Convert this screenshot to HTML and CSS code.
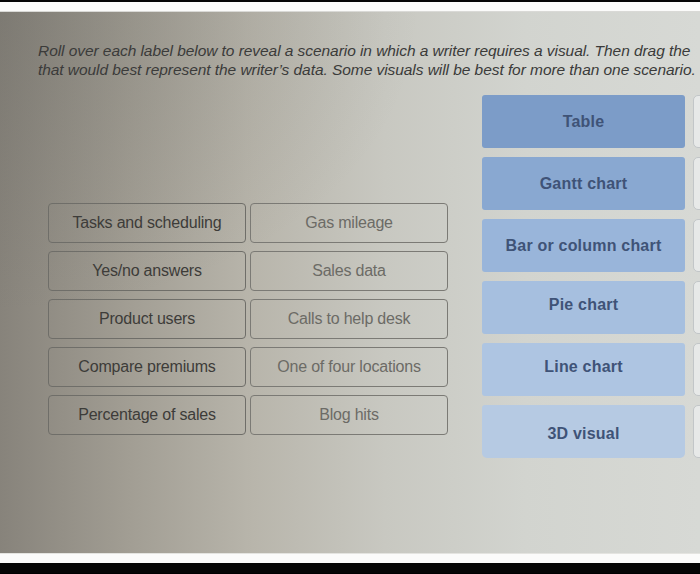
FILE: index.html
```html
<!DOCTYPE html>
<html lang="en">
<head>
<meta charset="utf-8">
<title>Match visuals to scenarios</title>
<link rel="stylesheet" href="styles.css">
</head>
<body>
<div class="frame">
  <div class="bezel bezel-top"></div>
  <div class="gap gap-top"></div>
  <main class="screen">
    <p class="instr">
      <span class="line">Roll over each label below to reveal a scenario in which a writer requires a visual. Then drag the</span>
      <span class="line">that would best represent the writer’s data. Some visuals will be best for more than one scenario.</span>
    </p>
    <div class="workarea">
      <div class="labels">
        <div class="label dark">Tasks and scheduling</div>
        <div class="label light">Gas mileage</div>
        <div class="label dark">Yes/no answers</div>
        <div class="label light">Sales data</div>
        <div class="label dark">Product users</div>
        <div class="label light">Calls to help desk</div>
        <div class="label dark">Compare premiums</div>
        <div class="label light">One of four locations</div>
        <div class="label dark">Percentage of sales</div>
        <div class="label light">Blog hits</div>
      </div>
      <div class="visuals">
        <div class="visual v1">Table</div>
        <div class="visual v2">Gantt chart</div>
        <div class="visual v3">Bar or column chart</div>
        <div class="visual v4">Pie chart</div>
        <div class="visual v5">Line chart</div>
        <div class="visual v6">3D visual</div>
      </div>
      <div class="targets">
        <div class="target"></div>
        <div class="target"></div>
        <div class="target"></div>
        <div class="target"></div>
        <div class="target"></div>
        <div class="target"></div>
      </div>
    </div>
  </main>
  <div class="gap gap-bottom"></div>
  <div class="bezel bezel-bottom"></div>
</div>
</body>
</html>
```

FILE: styles.css
```css
* { box-sizing: border-box; }
html, body { margin: 0; padding: 0; }
body {
  width: 700px;
  height: 574px;
  overflow: hidden;
  background: #000;
  font-family: "Liberation Sans", Arial, sans-serif;
}
.frame {
  display: flex;
  flex-direction: column;
  width: 700px;
  height: 574px;
}
.bezel { background: #050505; }
.bezel-top { height: 2px; }
.bezel-bottom { height: 10px; }
.gap { background: #fbfbfa; }
.gap-top { height: 10px; border-bottom: 1px solid #d9d9d6; }
.gap-bottom { height: 10px; border-top: 1px solid #e4e4e0; }

.screen {
  height: 541px;
  overflow: hidden;
  padding: 29px 0 0 38px;
  background:
    radial-gradient(ellipse 420px 300px at 0% 0%, rgba(90, 90, 85, 0.22), rgba(90, 90, 85, 0) 100%),
    linear-gradient(90deg, #87837b 0%, #a19d93 18%, #b8b5ab 36%, #c8c8c1 55%, #d2d4cf 75%, #d7d9d5 100%);
}

.instr {
  margin: 0;
  width: 662px;
  font-size: 15.5px;
  font-style: italic;
  line-height: 19px;
  color: #3b3b3a;
  letter-spacing: -0.06px;
}
.instr .line {
  display: block;
  white-space: nowrap;
}

.workarea {
  display: flex;
  align-items: flex-start;
  margin-top: 16px;
  width: 760px;
}

.labels {
  flex-shrink: 0;
  display: grid;
  grid-template-columns: 198px 198px;
  grid-auto-rows: 40px;
  column-gap: 4px;
  row-gap: 8px;
  margin: 108px 0 0 10px;
}
.label {
  display: flex;
  align-items: center;
  justify-content: center;
  border: 1.5px solid #6f6e69;
  border-radius: 4px;
  font-size: 16px;
  letter-spacing: -0.2px;
  padding-bottom: 1px;
}
.label.dark { color: #3d3c39; }
.label.light { color: #6c6b66; border-color: #7b7a75; }

.visuals {
  flex-shrink: 0;
  display: flex;
  flex-direction: column;
  gap: 9px;
  width: 203px;
  margin-left: 34px;
}
.visual {
  height: 53px;
  display: flex;
  align-items: center;
  justify-content: center;
  font-size: 16px;
  font-weight: bold;
  letter-spacing: 0.2px;
  color: #3f5377;
  border-radius: 3px;
}
.v1 { background: #7c9cc8; }
.v2 { background: #89a8d1; }
.v3 { background: #99b5da; }
.v4 { background: #a6bfdf; padding-bottom: 6px; }
.v5 { background: #aec5e2; padding-bottom: 5px; }
.v6 { background: #b6cae3; padding-top: 5px; border-radius: 3px 3px 5px 5px; }

.targets {
  flex-shrink: 0;
  display: flex;
  flex-direction: column;
  gap: 9px;
  margin-left: 8px;
  width: 120px;
}
.target {
  height: 53px;
  border: 1.5px solid #c2c6c8;
  border-radius: 5px;
  background: #e7e9e8;
}
```
